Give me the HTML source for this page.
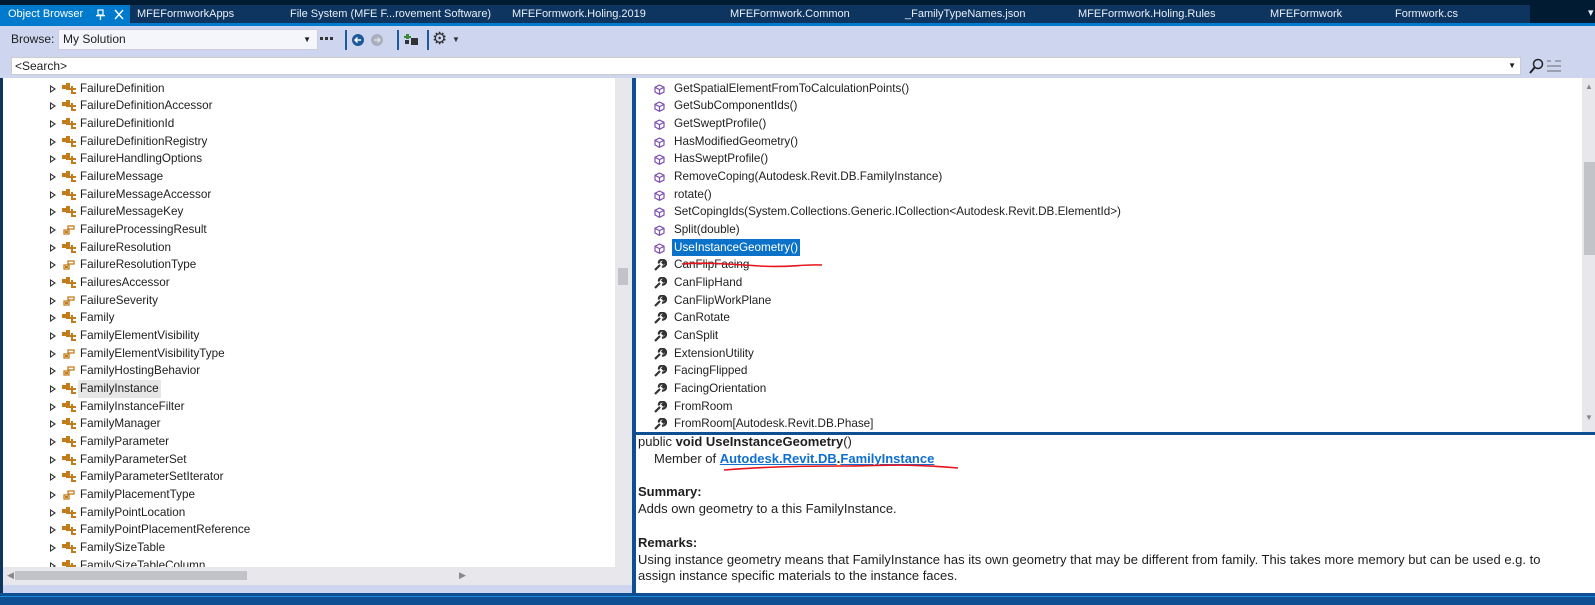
<!DOCTYPE html>
<html><head><meta charset="utf-8">
<style>
*{margin:0;padding:0;box-sizing:border-box}
html,body{width:1595px;height:605px;overflow:hidden}
body{background:#cdd5ef;font-family:"Liberation Sans",sans-serif;font-size:12px;color:#1e1e1e;position:relative}
.abs{position:absolute}
#tabs{left:0;top:0;width:1595px;height:24px;background:#011b33}
#tabstrip{left:0;top:5px;width:1530px;height:19px;background:#0e3560}
.tab{position:absolute;top:5px;height:19px;line-height:19px;color:#e8eef6;font-size:11px;white-space:nowrap}
#active{left:0;top:5px;width:130px;height:19px;background:#007acc;color:#fff;line-height:19px;padding-left:8px;font-size:11px}
#blueline{left:0;top:23px;width:1595px;height:3px;background:#007acc}
.row{position:absolute;height:17.67px;line-height:17.67px;white-space:nowrap;font-size:11.7px}
.tri{position:absolute;left:47px;top:5px;width:0;height:0;border-left:6px solid #333;border-top:4px solid transparent;border-bottom:4px solid transparent}
.tri:after{content:"";position:absolute;left:-5px;top:-2px;border-left:3px solid #fff;border-top:2px solid transparent;border-bottom:2px solid transparent}
</style></head><body>
<div id="tabs" class="abs"></div>
<div id="tabstrip" class="abs"></div>
<div id="active" class="abs">Object Browser</div>
<svg class="abs" style="left:96px;top:9px" width="30" height="12"><g fill="#fff"><rect x="2" y="1" width="5" height="5" fill="none" stroke="#fff" stroke-width="1.2"/><rect x="0" y="6" width="9" height="1.3"/><rect x="3.8" y="7" width="1.3" height="4"/></g><path d="M19 1L27 10M27 1L19 10" stroke="#fff" stroke-width="1.4"/></svg>
<div class="tab" style="left:137px">MFEFormworkApps</div>
<div class="tab" style="left:290px">File System (MFE F...rovement Software)</div>
<div class="tab" style="left:512px">MFEFormwork.Holing.2019</div>
<div class="tab" style="left:730px">MFEFormwork.Common</div>
<div class="tab" style="left:905px">_FamilyTypeNames.json</div>
<div class="tab" style="left:1078px">MFEFormwork.Holing.Rules</div>
<div class="tab" style="left:1270px">MFEFormwork</div>
<div class="tab" style="left:1395px">Formwork.cs</div>
<div class="tab" style="left:1588px;top:4px">▾</div>
<div id="blueline" class="abs"></div>

<!-- toolbar -->
<div class="abs" style="left:11px;top:32px;font-size:12px;line-height:14px">Browse:</div>
<div class="abs" style="left:58px;top:29px;width:260px;height:21px;background:#f5f6fb;border:1px solid #ccd;line-height:19px;padding-left:4px;font-size:12px">My Solution<span style="position:absolute;right:6px;top:0;font-size:8px">▼</span></div>
<svg class="abs" style="left:320px;top:37px" width="14" height="4"><g fill="#333"><rect x="0" y="0" width="3" height="3"/><rect x="5" y="0" width="3" height="3"/><rect x="10" y="0" width="3" height="3"/></g></svg>
<div class="abs" style="left:345px;top:30px;width:2px;height:20px;background:#1e5a99"></div>
<svg class="abs" style="left:352px;top:34px" width="34" height="13"><circle cx="6" cy="6" r="6" fill="#1e5a99"/><path d="M9 6H3M5.5 3.5L3 6L5.5 8.5" stroke="#fff" stroke-width="1.5" fill="none"/><circle cx="25" cy="6" r="6" fill="#a8aec0"/><path d="M22 6H28M25.5 3.5L28 6L25.5 8.5" stroke="#ddd" stroke-width="1.5" fill="none"/></svg>
<div class="abs" style="left:397px;top:30px;width:2px;height:20px;background:#1e5a99"></div>
<div class="abs" style="left:406px;top:34px;width:3px;height:5px;background:#388a34"></div>
<div class="abs" style="left:404px;top:36px;width:7px;height:2px;background:#388a34"></div>
<div class="abs" style="left:405px;top:40px;width:4px;height:4px;background:#333"></div>
<div class="abs" style="left:411px;top:38px;width:7px;height:7px;background:#333"></div>
<div class="abs" style="left:427px;top:30px;width:2px;height:20px;background:#1e5a99"></div>
<div class="abs" style="left:432px;top:29px;font-size:17px;color:#333;line-height:20px">⚙</div>
<div class="abs" style="left:452px;top:35px;font-size:8px;color:#333">▼</div>

<div class="abs" style="left:11px;top:57px;width:1510px;height:18px;background:#fff;border:1px solid #ccc;line-height:16px;padding-left:3px;font-size:12px">&lt;Search&gt;<span style="position:absolute;right:4px;top:0;font-size:8px">▼</span></div>
<svg class="abs" style="left:1528px;top:58px" width="16" height="17"><circle cx="10" cy="6" r="4.5" fill="none" stroke="#222" stroke-width="1.5"/><line x1="7" y1="9" x2="2" y2="15" stroke="#222" stroke-width="2"/></svg>
<svg class="abs" style="left:1547px;top:59px" width="16" height="16"><g fill="#9aa0b0"><rect x="0" y="1" width="4" height="2"/><rect x="8" y="1" width="6" height="2"/><rect x="0" y="6" width="14" height="2"/><rect x="0" y="11" width="14" height="2"/></g></svg>

<!-- left panel -->
<div class="abs" style="left:3px;top:78px;width:612px;height:489px;background:#fff;overflow:hidden" id="left"></div>
<div class="abs" style="left:0;top:78px;width:3px;height:515px;background:#0e3560"></div>
<div class="abs" style="left:615px;top:78px;width:17px;height:489px;background:#e8e8ec"></div>
<div class="abs" style="left:618px;top:268px;width:10px;height:17px;background:#c2c3c9"></div>
<div class="abs" style="left:3px;top:567px;width:629px;height:18px;background:#e8e8ec"></div>
<div class="abs" style="left:15px;top:571px;width:232px;height:9px;background:#c2c3c9"></div>
<div class="abs" style="left:7px;top:570px;font-size:9px;color:#888">◀</div>
<div class="abs" style="left:459px;top:570px;font-size:9px;color:#888">▶</div>
<div class="abs" style="left:3px;top:585px;width:629px;height:8px;background:#cdd5ef"></div>

<!-- right list -->
<div class="abs" style="left:636px;top:78px;width:946px;height:354px;background:#fff;overflow:hidden" id="right"></div>
<div class="abs" style="left:1582px;top:78px;width:13px;height:354px;background:#e8e8ec"></div>
<div class="abs" style="left:1584px;top:162px;width:11px;height:93px;background:#c2c3c9"></div>
<div class="abs" style="left:1585px;top:82px;font-size:8px;color:#888">▲</div>
<div class="abs" style="left:1585px;top:413px;font-size:8px;color:#888">▼</div>

<!-- detail -->
<div class="abs" style="left:636px;top:435px;width:959px;height:158px;background:#fff"></div>
<div class="abs" style="left:636px;top:435px;width:959px;font-size:13px;line-height:16.8px;padding-left:2px;margin-top:-1px">
<div>public <b>void UseInstanceGeometry</b>()</div>
<div style="padding-left:16px">Member of <b><u style="color:#0e6fd0">Autodesk.Revit.DB</u>.<u style="color:#0e6fd0">FamilyInstance</u></b></div>
<div style="height:16.8px"></div>
<div><b>Summary:</b></div>
<div>Adds own geometry to a this FamilyInstance.</div>
<div style="height:16.8px"></div>
<div><b>Remarks:</b></div>
<div>Using instance geometry means that FamilyInstance has its own geometry that may be different from family. This takes more memory but can be used e.g. to</div>
<div>assign instance specific materials to the instance faces.</div>
</div>
<div class="abs" style="left:636px;top:432px;width:959px;height:3px;background:#0e4f93"></div>
<div class="abs" style="left:632px;top:78px;width:4px;height:515px;background:#0e4f93"></div>

<div class="abs" style="left:0;top:593px;width:1595px;height:12px;background:#0e4f93"></div>
<div class="abs" style="left:0;top:596px;width:1595px;height:1px;background:#1c8ad8"></div>

<svg class="abs" style="left:0;top:0;pointer-events:none" width="1595" height="605">
<path d="M682 264 C700 262,730 264,760 266 S800 264,822 265" fill="none" stroke="#e8141c" stroke-width="1.6"/>
<path d="M724 470 C760 467,800 466,840 466 S900 463,958 468" fill="none" stroke="#e8141c" stroke-width="1.6"/>
</svg>

<script>
const cls='<svg style="position:absolute;left:59px;top:3px" width="16" height="13"><g fill="#c27c1c"><rect x="0" y="2" width="5" height="4"/><rect x="4" y="0" width="4" height="5"/><rect x="9" y="3" width="2" height="8"/><rect x="9" y="5" width="5" height="2"/><rect x="9" y="9" width="5" height="2"/><rect x="4" y="5" width="6" height="2"/></g></svg>';
const en='<svg style="position:absolute;left:60px;top:4px" width="14" height="11"><g fill="none" stroke="#c27c1c" stroke-width="1.3"><rect x="5" y="1" width="6" height="3"/><rect x="1" y="5" width="5" height="4"/></g><rect x="2" y="6" width="3" height="2" fill="#c27c1c"/></svg>';
const L=[["FailureDefinition",0],["FailureDefinitionAccessor",0],["FailureDefinitionId",0],["FailureDefinitionRegistry",0],["FailureHandlingOptions",0],["FailureMessage",0],["FailureMessageAccessor",0],["FailureMessageKey",0],["FailureProcessingResult",1],["FailureResolution",0],["FailureResolutionType",1],["FailuresAccessor",0],["FailureSeverity",1],["Family",0],["FamilyElementVisibility",0],["FamilyElementVisibilityType",1],["FamilyHostingBehavior",1],["FamilyInstance",0],["FamilyInstanceFilter",0],["FamilyManager",0],["FamilyParameter",0],["FamilyParameterSet",0],["FamilyParameterSetIterator",0],["FamilyPlacementType",1],["FamilyPointLocation",0],["FamilyPointPlacementReference",0],["FamilySizeTable",0],["FamilySizeTableColumn",0]];
let h='';L.forEach((r,i)=>{const t=1.5+i*17.67;
h+=`<div class="row" style="left:0;top:${t}px;width:612px"><div class="tri"></div>${r[1]?en:cls}<span style="position:absolute;left:77px;${r[0]=='FamilyInstance'?'background:#e6e6e6;padding:0 2px;left:75px':''}">${r[0]}</span></div>`});
document.getElementById('left').innerHTML=h;
const m='<svg style="position:absolute;left:18px;top:4px" width="11" height="11"><g fill="none" stroke="#7d4fb0" stroke-width="1.2"><path d="M5.5 1L10 3.3V8L5.5 10.3L1 8V3.3Z"/><path d="M1 3.3L5.5 5.6L10 3.3M5.5 5.6V10.3"/></g></svg>';
const w='<svg style="position:absolute;left:18px;top:3px" width="13" height="12"><path d="M1 11L6 6M5 4.5A3.3 3.3 0 0 1 10.5 1.5L8.5 3.5L9.5 4.5L11.5 2.5A3.3 3.3 0 0 1 8 7.5" fill="none" stroke="#333" stroke-width="2.2"/></svg>';
const R=[["GetSpatialElementFromToCalculationPoints()",m],["GetSubComponentIds()",m],["GetSweptProfile()",m],["HasModifiedGeometry()",m],["HasSweptProfile()",m],["RemoveCoping(Autodesk.Revit.DB.FamilyInstance)",m],["rotate()",m],["SetCopingIds(System.Collections.Generic.ICollection&lt;Autodesk.Revit.DB.ElementId&gt;)",m],["Split(double)",m],["UseInstanceGeometry()",m],["CanFlipFacing",w],["CanFlipHand",w],["CanFlipWorkPlane",w],["CanRotate",w],["CanSplit",w],["ExtensionUtility",w],["FacingFlipped",w],["FacingOrientation",w],["FromRoom",w],["FromRoom[Autodesk.Revit.DB.Phase]",w]];
h='';R.forEach((r,i)=>{const t=1.5+i*17.67;const sel=i==9;
h+=`<div class="row" style="left:0;top:${t}px;width:940px">${r[1]}<span style="position:absolute;left:${sel?36:38}px;${sel?'background:#0a72c9;color:#fff;padding:0 2px;':''}">${r[0]}</span></div>`});
document.getElementById('right').innerHTML=h;
</script>
</body></html>
